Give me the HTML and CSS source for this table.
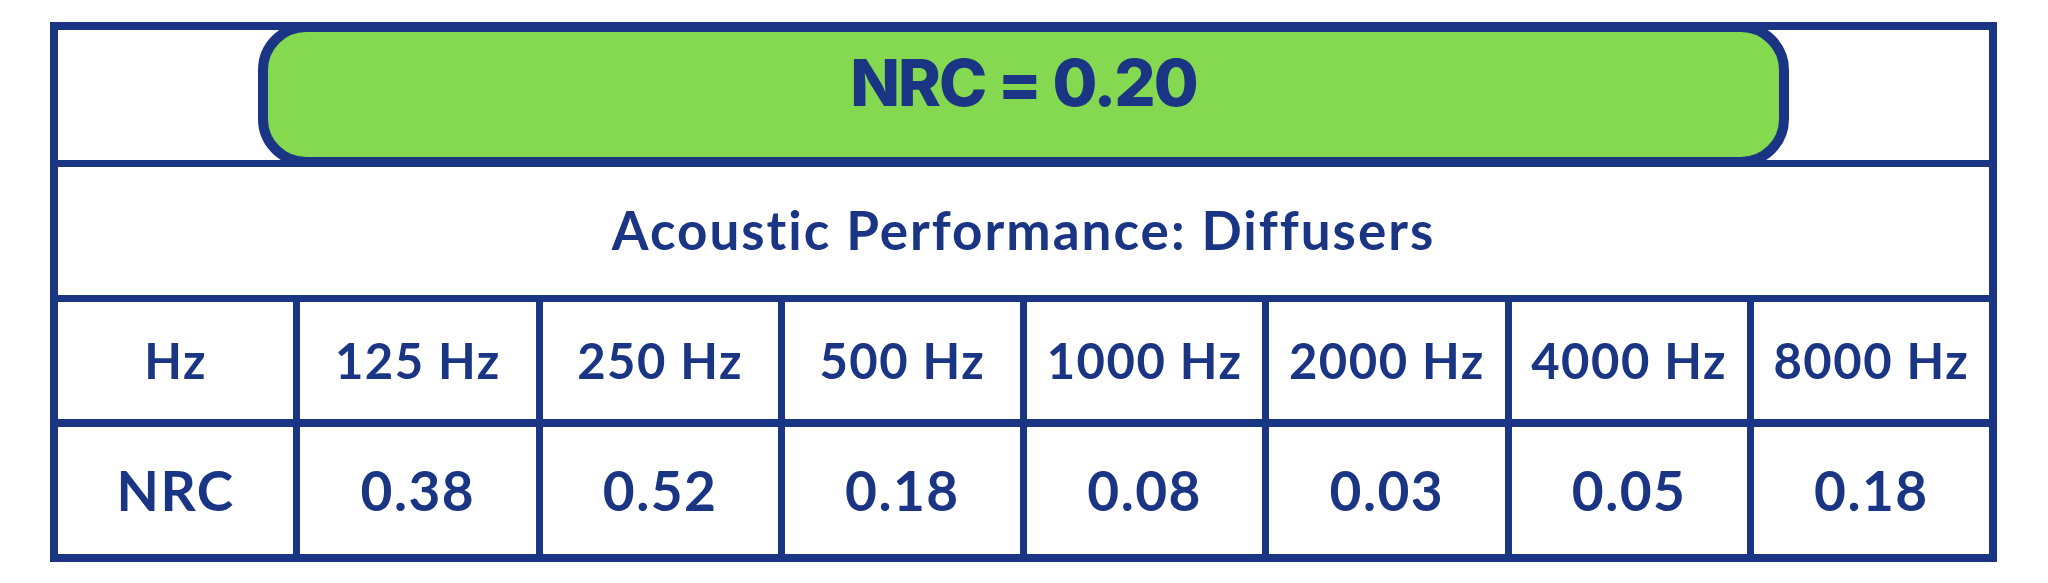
FILE: index.html
```html
<!DOCTYPE html>
<html lang="en">
<head>
<meta charset="utf-8">
<title>NRC Table</title>
<link rel="stylesheet" href="styles.css">
</head>
<body>
<div class="page">
  <div class="card">
    <div class="title-row">
      <div class="pill"><span class="pill-text">NRC = 0.20</span></div>
    </div>
    <div class="subtitle-row">Acoustic Performance: Diffusers</div>
    <div class="grid-row head">
      <div class="cell">Hz</div>
      <div class="cell">125 Hz</div>
      <div class="cell">250 Hz</div>
      <div class="cell">500 Hz</div>
      <div class="cell">1000 Hz</div>
      <div class="cell">2000 Hz</div>
      <div class="cell">4000 Hz</div>
      <div class="cell">8000 Hz</div>
    </div>
    <div class="grid-row vals">
      <div class="cell">NRC</div>
      <div class="cell">0.38</div>
      <div class="cell">0.52</div>
      <div class="cell">0.18</div>
      <div class="cell">0.08</div>
      <div class="cell">0.03</div>
      <div class="cell">0.05</div>
      <div class="cell">0.18</div>
    </div>
  </div>
</div>
</body>
</html>
```

FILE: styles.css
```css
* { box-sizing: border-box; }
html, body { margin: 0; padding: 0; background: #ffffff; }
body {
  font-family: "Lato", "Noto Sans", sans-serif;
  color: #1a3584;
}
.page {
  padding: 22px 0 0 50px;
}
.card {
  width: 1947px;
  height: 540px;
  border: 8px solid #1a3584;
  display: flex;
  flex-direction: column;
  background: #1a3584;
}
.title-row {
  height: 130px;
  display: flex;
  justify-content: center;
  background: #ffffff;
}
.pill {
  position: relative;
  z-index: 1;
  width: 1531px;
  height: 145px;
  margin: -8px 0 -7px 0;
  background: #84d950;
  border: 10px solid #1a3584;
  border-radius: 48px;
  display: flex;
  align-items: center;
  justify-content: center;
  padding-bottom: 24px;
}
.pill-text {
  font-family: "Inter", "Lato", sans-serif;
  font-weight: 800;
  font-size: 65px;
  letter-spacing: -2px;
  line-height: 1;
}
.subtitle-row {
  height: 128px;
  margin-top: 7px;
  background: #ffffff;
  display: flex;
  align-items: center;
  justify-content: center;
  font-weight: 700;
  font-size: 53px;
  letter-spacing: 2px;
  line-height: 1;
  padding-bottom: 4px;
}
.grid-row {
  display: grid;
  grid-template-columns: repeat(8, 1fr);
  column-gap: 7px;
}
.grid-row.head {
  height: 117px;
  margin-top: 7px;
}
.grid-row.vals {
  height: 127px;
  margin-top: 8px;
}
.cell {
  background: #ffffff;
  display: flex;
  align-items: center;
  justify-content: center;
  font-weight: 700;
  line-height: 1;
  white-space: nowrap;
}
.head .cell { font-size: 49px; letter-spacing: 1.5px; }
.vals .cell { font-size: 55px; letter-spacing: 1.5px; }
```
